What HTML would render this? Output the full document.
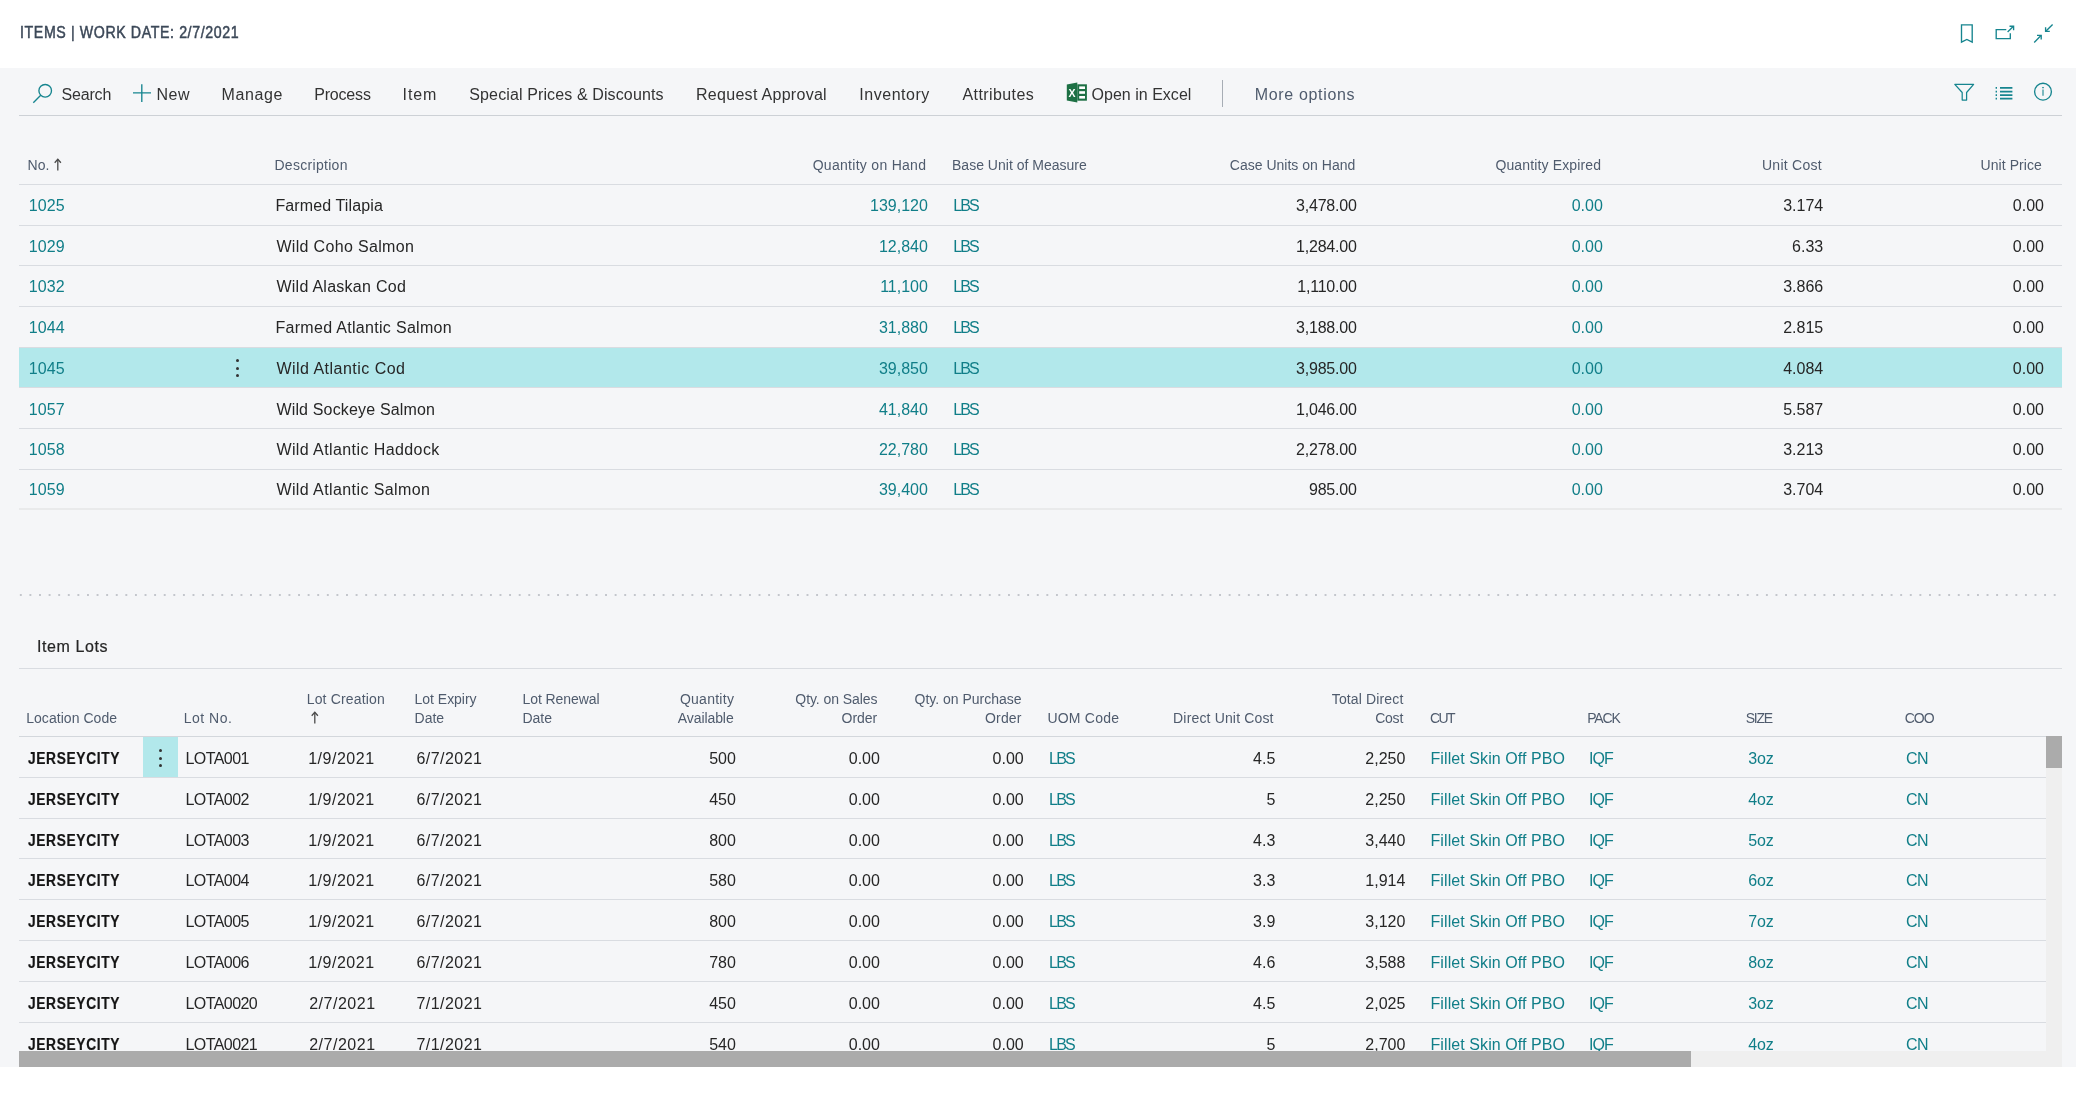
<!DOCTYPE html>
<html><head><meta charset="utf-8"><title>Items</title>
<style>
html,body{margin:0;padding:0;background:#fff;width:2076px;height:1095px;overflow:hidden;position:relative}
.t{position:absolute;white-space:nowrap;font-family:"Liberation Sans", sans-serif}
#root{position:absolute;left:0;top:0;width:2076px;height:1095px;will-change:transform}
</style></head><body><div id="root">
<div style="position:absolute;left:0px;top:68px;width:2076px;height:999px;background:#f5f6f8;"></div><div class="t" style="left:20.2px;top:24.33px;font-size:16.5px;line-height:16.5px;color:#3c4858;letter-spacing:0.7px;transform:scaleX(0.86);transform-origin:0 0;-webkit-text-stroke:0.5px #3c4858">ITEMS | WORK DATE: 2/7/2021</div><div class="t" style="left:61.60px;top:86.66px;font-size:16px;line-height:16px;color:#333333;font-weight:400;letter-spacing:-0.199px;">Search</div><div class="t" style="left:156.50px;top:86.66px;font-size:16px;line-height:16px;color:#333333;font-weight:400;letter-spacing:0.473px;">New</div><div class="t" style="left:221.50px;top:86.66px;font-size:16px;line-height:16px;color:#333333;font-weight:400;letter-spacing:0.616px;">Manage</div><div class="t" style="left:314.20px;top:86.66px;font-size:16px;line-height:16px;color:#333333;font-weight:400;letter-spacing:-0.183px;">Process</div><div class="t" style="left:402.60px;top:86.66px;font-size:16px;line-height:16px;color:#333333;font-weight:400;letter-spacing:0.870px;">Item</div><div class="t" style="left:469.30px;top:86.66px;font-size:16px;line-height:16px;color:#333333;font-weight:400;letter-spacing:0.120px;">Special Prices &amp; Discounts</div><div class="t" style="left:696.00px;top:86.66px;font-size:16px;line-height:16px;color:#333333;font-weight:400;letter-spacing:0.291px;">Request Approval</div><div class="t" style="left:859.30px;top:86.66px;font-size:16px;line-height:16px;color:#333333;font-weight:400;letter-spacing:0.523px;">Inventory</div><div class="t" style="left:962.50px;top:86.66px;font-size:16px;line-height:16px;color:#333333;font-weight:400;letter-spacing:0.402px;">Attributes</div><div class="t" style="left:1091.50px;top:86.66px;font-size:16px;line-height:16px;color:#333333;font-weight:400;letter-spacing:0.020px;">Open in Excel</div><div class="t" style="left:1254.80px;top:86.66px;font-size:16px;line-height:16px;color:#4f5b6d;font-weight:400;letter-spacing:0.655px;">More options</div><div style="position:absolute;left:19px;top:115px;width:2043px;height:1px;background:#cdd1d6;"></div><div style="position:absolute;left:1222px;top:80px;width:1px;height:27px;background:#a7adb5;"></div><div class="t" style="left:27.60px;top:158.05px;font-size:14px;line-height:14px;color:#4f5b6d;font-weight:400;letter-spacing:0.000px;">No.</div><svg style="position:absolute;left:53px;top:157px" width="10" height="15" viewBox="0 0 10 15" fill="none" stroke="#4a4a4a" stroke-width="1.3"><path d="M4.8 2.6 V13.5"/><path d="M1.7 5.7 L4.8 2.3 L7.9 5.7"/></svg><div class="t" style="left:274.40px;top:158.05px;font-size:14px;line-height:14px;color:#4f5b6d;font-weight:400;letter-spacing:0.306px;">Description</div><div class="t" style="left:812.70px;top:158.05px;font-size:14px;line-height:14px;color:#4f5b6d;font-weight:400;letter-spacing:0.289px;">Quantity on Hand</div><div class="t" style="left:952.00px;top:158.05px;font-size:14px;line-height:14px;color:#4f5b6d;font-weight:400;letter-spacing:0.009px;">Base Unit of Measure</div><div class="t" style="left:1229.80px;top:158.05px;font-size:14px;line-height:14px;color:#4f5b6d;font-weight:400;letter-spacing:0.012px;">Case Units on Hand</div><div class="t" style="left:1495.40px;top:158.05px;font-size:14px;line-height:14px;color:#4f5b6d;font-weight:400;letter-spacing:0.146px;">Quantity Expired</div><div class="t" style="left:1762.00px;top:158.05px;font-size:14px;line-height:14px;color:#4f5b6d;font-weight:400;letter-spacing:0.252px;">Unit Cost</div><div class="t" style="left:1980.50px;top:158.05px;font-size:14px;line-height:14px;color:#4f5b6d;font-weight:400;letter-spacing:0.078px;">Unit Price</div><div style="position:absolute;left:19px;top:184px;width:2043px;height:1px;background:#d9dce1;"></div><div class="t" style="left:28.80px;top:197.96px;font-size:16px;line-height:16px;color:#107e88;font-weight:400;letter-spacing:0.100px;">1025</div><div class="t" style="left:275.40px;top:197.96px;font-size:16px;line-height:16px;color:#262626;font-weight:400;letter-spacing:0.122px;">Farmed Tilapia</div><div class="t" style="left:870.06px;top:197.96px;font-size:16px;line-height:16px;color:#107e88;font-weight:400;letter-spacing:0.000px;">139,120</div><div class="t" style="left:953.30px;top:197.96px;font-size:16px;line-height:16px;color:#107e88;font-weight:400;letter-spacing:-1.935px;">LBS</div><div class="t" style="left:1296.02px;top:197.96px;font-size:16px;line-height:16px;color:#262626;font-weight:400;letter-spacing:-0.200px;">3,478.00</div><div class="t" style="left:1571.66px;top:197.96px;font-size:16px;line-height:16px;color:#107e88;font-weight:400;letter-spacing:0.000px;">0.00</div><div class="t" style="left:1783.16px;top:197.96px;font-size:16px;line-height:16px;color:#262626;font-weight:400;letter-spacing:0.000px;">3.174</div><div class="t" style="left:2012.86px;top:197.96px;font-size:16px;line-height:16px;color:#262626;font-weight:400;letter-spacing:0.000px;">0.00</div><div style="position:absolute;left:19px;top:225px;width:2043px;height:1px;background:#d9dce1;"></div><div class="t" style="left:28.80px;top:238.96px;font-size:16px;line-height:16px;color:#107e88;font-weight:400;letter-spacing:0.100px;">1029</div><div class="t" style="left:276.40px;top:238.96px;font-size:16px;line-height:16px;color:#262626;font-weight:400;letter-spacing:0.327px;">Wild Coho Salmon</div><div class="t" style="left:878.96px;top:238.96px;font-size:16px;line-height:16px;color:#107e88;font-weight:400;letter-spacing:0.000px;">12,840</div><div class="t" style="left:953.30px;top:238.96px;font-size:16px;line-height:16px;color:#107e88;font-weight:400;letter-spacing:-1.935px;">LBS</div><div class="t" style="left:1296.02px;top:238.96px;font-size:16px;line-height:16px;color:#262626;font-weight:400;letter-spacing:-0.200px;">1,284.00</div><div class="t" style="left:1571.66px;top:238.96px;font-size:16px;line-height:16px;color:#107e88;font-weight:400;letter-spacing:0.000px;">0.00</div><div class="t" style="left:1792.06px;top:238.96px;font-size:16px;line-height:16px;color:#262626;font-weight:400;letter-spacing:0.000px;">6.33</div><div class="t" style="left:2012.86px;top:238.96px;font-size:16px;line-height:16px;color:#262626;font-weight:400;letter-spacing:0.000px;">0.00</div><div style="position:absolute;left:19px;top:265px;width:2043px;height:1px;background:#d9dce1;"></div><div class="t" style="left:28.80px;top:278.96px;font-size:16px;line-height:16px;color:#107e88;font-weight:400;letter-spacing:0.100px;">1032</div><div class="t" style="left:276.40px;top:278.96px;font-size:16px;line-height:16px;color:#262626;font-weight:400;letter-spacing:0.268px;">Wild Alaskan Cod</div><div class="t" style="left:880.15px;top:278.96px;font-size:16px;line-height:16px;color:#107e88;font-weight:400;letter-spacing:0.000px;">11,100</div><div class="t" style="left:953.30px;top:278.96px;font-size:16px;line-height:16px;color:#107e88;font-weight:400;letter-spacing:-1.935px;">LBS</div><div class="t" style="left:1297.20px;top:278.96px;font-size:16px;line-height:16px;color:#262626;font-weight:400;letter-spacing:-0.200px;">1,110.00</div><div class="t" style="left:1571.66px;top:278.96px;font-size:16px;line-height:16px;color:#107e88;font-weight:400;letter-spacing:0.000px;">0.00</div><div class="t" style="left:1783.16px;top:278.96px;font-size:16px;line-height:16px;color:#262626;font-weight:400;letter-spacing:0.000px;">3.866</div><div class="t" style="left:2012.86px;top:278.96px;font-size:16px;line-height:16px;color:#262626;font-weight:400;letter-spacing:0.000px;">0.00</div><div style="position:absolute;left:19px;top:306px;width:2043px;height:1px;background:#d9dce1;"></div><div class="t" style="left:28.80px;top:319.96px;font-size:16px;line-height:16px;color:#107e88;font-weight:400;letter-spacing:0.100px;">1044</div><div class="t" style="left:275.40px;top:319.96px;font-size:16px;line-height:16px;color:#262626;font-weight:400;letter-spacing:0.308px;">Farmed Atlantic Salmon</div><div class="t" style="left:878.96px;top:319.96px;font-size:16px;line-height:16px;color:#107e88;font-weight:400;letter-spacing:0.000px;">31,880</div><div class="t" style="left:953.30px;top:319.96px;font-size:16px;line-height:16px;color:#107e88;font-weight:400;letter-spacing:-1.935px;">LBS</div><div class="t" style="left:1296.02px;top:319.96px;font-size:16px;line-height:16px;color:#262626;font-weight:400;letter-spacing:-0.200px;">3,188.00</div><div class="t" style="left:1571.66px;top:319.96px;font-size:16px;line-height:16px;color:#107e88;font-weight:400;letter-spacing:0.000px;">0.00</div><div class="t" style="left:1783.16px;top:319.96px;font-size:16px;line-height:16px;color:#262626;font-weight:400;letter-spacing:0.000px;">2.815</div><div class="t" style="left:2012.86px;top:319.96px;font-size:16px;line-height:16px;color:#262626;font-weight:400;letter-spacing:0.000px;">0.00</div><div style="position:absolute;left:19px;top:347px;width:2043px;height:1px;background:#d9dce1;"></div><div style="position:absolute;left:19px;top:348px;width:2043px;height:40px;background:#b2e8eb;"></div><div style="position:absolute;left:235.85px;top:359.3px;width:3px;height:3px;border-radius:50%;background:#333"></div><div style="position:absolute;left:235.85px;top:366.5px;width:3px;height:3px;border-radius:50%;background:#333"></div><div style="position:absolute;left:235.85px;top:373.7px;width:3px;height:3px;border-radius:50%;background:#333"></div><div class="t" style="left:28.80px;top:360.96px;font-size:16px;line-height:16px;color:#107e88;font-weight:400;letter-spacing:0.100px;">1045</div><div class="t" style="left:276.40px;top:360.96px;font-size:16px;line-height:16px;color:#262626;font-weight:400;letter-spacing:0.480px;">Wild Atlantic Cod</div><div class="t" style="left:878.96px;top:360.96px;font-size:16px;line-height:16px;color:#107e88;font-weight:400;letter-spacing:0.000px;">39,850</div><div class="t" style="left:953.30px;top:360.96px;font-size:16px;line-height:16px;color:#107e88;font-weight:400;letter-spacing:-1.935px;">LBS</div><div class="t" style="left:1296.02px;top:360.96px;font-size:16px;line-height:16px;color:#262626;font-weight:400;letter-spacing:-0.200px;">3,985.00</div><div class="t" style="left:1571.66px;top:360.96px;font-size:16px;line-height:16px;color:#107e88;font-weight:400;letter-spacing:0.000px;">0.00</div><div class="t" style="left:1783.16px;top:360.96px;font-size:16px;line-height:16px;color:#262626;font-weight:400;letter-spacing:0.000px;">4.084</div><div class="t" style="left:2012.86px;top:360.96px;font-size:16px;line-height:16px;color:#262626;font-weight:400;letter-spacing:0.000px;">0.00</div><div style="position:absolute;left:19px;top:387px;width:2043px;height:1px;background:#d9dce1;"></div><div class="t" style="left:28.80px;top:401.96px;font-size:16px;line-height:16px;color:#107e88;font-weight:400;letter-spacing:0.100px;">1057</div><div class="t" style="left:276.40px;top:401.96px;font-size:16px;line-height:16px;color:#262626;font-weight:400;letter-spacing:0.166px;">Wild Sockeye Salmon</div><div class="t" style="left:878.96px;top:401.96px;font-size:16px;line-height:16px;color:#107e88;font-weight:400;letter-spacing:0.000px;">41,840</div><div class="t" style="left:953.30px;top:401.96px;font-size:16px;line-height:16px;color:#107e88;font-weight:400;letter-spacing:-1.935px;">LBS</div><div class="t" style="left:1296.02px;top:401.96px;font-size:16px;line-height:16px;color:#262626;font-weight:400;letter-spacing:-0.200px;">1,046.00</div><div class="t" style="left:1571.66px;top:401.96px;font-size:16px;line-height:16px;color:#107e88;font-weight:400;letter-spacing:0.000px;">0.00</div><div class="t" style="left:1783.16px;top:401.96px;font-size:16px;line-height:16px;color:#262626;font-weight:400;letter-spacing:0.000px;">5.587</div><div class="t" style="left:2012.86px;top:401.96px;font-size:16px;line-height:16px;color:#262626;font-weight:400;letter-spacing:0.000px;">0.00</div><div style="position:absolute;left:19px;top:428px;width:2043px;height:1px;background:#d9dce1;"></div><div class="t" style="left:28.80px;top:441.96px;font-size:16px;line-height:16px;color:#107e88;font-weight:400;letter-spacing:0.100px;">1058</div><div class="t" style="left:276.40px;top:441.96px;font-size:16px;line-height:16px;color:#262626;font-weight:400;letter-spacing:0.409px;">Wild Atlantic Haddock</div><div class="t" style="left:878.96px;top:441.96px;font-size:16px;line-height:16px;color:#107e88;font-weight:400;letter-spacing:0.000px;">22,780</div><div class="t" style="left:953.30px;top:441.96px;font-size:16px;line-height:16px;color:#107e88;font-weight:400;letter-spacing:-1.935px;">LBS</div><div class="t" style="left:1296.02px;top:441.96px;font-size:16px;line-height:16px;color:#262626;font-weight:400;letter-spacing:-0.200px;">2,278.00</div><div class="t" style="left:1571.66px;top:441.96px;font-size:16px;line-height:16px;color:#107e88;font-weight:400;letter-spacing:0.000px;">0.00</div><div class="t" style="left:1783.16px;top:441.96px;font-size:16px;line-height:16px;color:#262626;font-weight:400;letter-spacing:0.000px;">3.213</div><div class="t" style="left:2012.86px;top:441.96px;font-size:16px;line-height:16px;color:#262626;font-weight:400;letter-spacing:0.000px;">0.00</div><div style="position:absolute;left:19px;top:469px;width:2043px;height:1px;background:#d9dce1;"></div><div class="t" style="left:28.80px;top:481.96px;font-size:16px;line-height:16px;color:#107e88;font-weight:400;letter-spacing:0.100px;">1059</div><div class="t" style="left:276.40px;top:481.96px;font-size:16px;line-height:16px;color:#262626;font-weight:400;letter-spacing:0.404px;">Wild Atlantic Salmon</div><div class="t" style="left:878.96px;top:481.96px;font-size:16px;line-height:16px;color:#107e88;font-weight:400;letter-spacing:0.000px;">39,400</div><div class="t" style="left:953.30px;top:481.96px;font-size:16px;line-height:16px;color:#107e88;font-weight:400;letter-spacing:-1.935px;">LBS</div><div class="t" style="left:1308.96px;top:481.96px;font-size:16px;line-height:16px;color:#262626;font-weight:400;letter-spacing:-0.200px;">985.00</div><div class="t" style="left:1571.66px;top:481.96px;font-size:16px;line-height:16px;color:#107e88;font-weight:400;letter-spacing:0.000px;">0.00</div><div class="t" style="left:1783.16px;top:481.96px;font-size:16px;line-height:16px;color:#262626;font-weight:400;letter-spacing:0.000px;">3.704</div><div class="t" style="left:2012.86px;top:481.96px;font-size:16px;line-height:16px;color:#262626;font-weight:400;letter-spacing:0.000px;">0.00</div><div style="position:absolute;left:19px;top:508px;width:2043px;height:2px;background:#e9eaeb;"></div><div style="position:absolute;left:15.6px;top:594px;width:2044px;height:2px;background-image:radial-gradient(circle, #c3c6cc 1px, transparent 1.2px);background-size:9.6px 2px;background-repeat:repeat-x"></div><div class="t" style="left:37.00px;top:638.56px;font-size:16px;line-height:16px;color:#262626;font-weight:400;letter-spacing:0.599px;-webkit-text-stroke:0.2px #262626;">Item Lots</div><div style="position:absolute;left:19px;top:668px;width:2043px;height:1px;background:#d9dce1;"></div><div class="t" style="left:26.20px;top:711.45px;font-size:14px;line-height:14px;color:#4f5b6d;font-weight:400;letter-spacing:0.050px;">Location Code</div><div class="t" style="left:183.80px;top:711.45px;font-size:14px;line-height:14px;color:#4f5b6d;font-weight:400;letter-spacing:0.492px;">Lot No.</div><div class="t" style="left:306.70px;top:692.45px;font-size:14px;line-height:14px;color:#4f5b6d;font-weight:400;letter-spacing:0.165px;">Lot Creation</div><svg style="position:absolute;left:310px;top:710px" width="10" height="15" viewBox="0 0 10 15" fill="none" stroke="#4a4a4a" stroke-width="1.3"><path d="M4.8 2.6 V13.5"/><path d="M1.7 5.7 L4.8 2.3 L7.9 5.7"/></svg><div class="t" style="left:414.60px;top:692.45px;font-size:14px;line-height:14px;color:#4f5b6d;font-weight:400;letter-spacing:-0.028px;">Lot Expiry</div><div class="t" style="left:414.60px;top:711.45px;font-size:14px;line-height:14px;color:#4f5b6d;font-weight:400;letter-spacing:-0.029px;">Date</div><div class="t" style="left:522.50px;top:692.45px;font-size:14px;line-height:14px;color:#4f5b6d;font-weight:400;letter-spacing:-0.082px;">Lot Renewal</div><div class="t" style="left:522.50px;top:711.45px;font-size:14px;line-height:14px;color:#4f5b6d;font-weight:400;letter-spacing:-0.029px;">Date</div><div class="t" style="left:679.90px;top:692.45px;font-size:14px;line-height:14px;color:#4f5b6d;font-weight:400;letter-spacing:0.266px;">Quantity</div><div class="t" style="left:677.80px;top:711.45px;font-size:14px;line-height:14px;color:#4f5b6d;font-weight:400;letter-spacing:-0.084px;">Available</div><div class="t" style="left:795.30px;top:692.45px;font-size:14px;line-height:14px;color:#4f5b6d;font-weight:400;letter-spacing:-0.058px;">Qty. on Sales</div><div class="t" style="left:841.60px;top:711.45px;font-size:14px;line-height:14px;color:#4f5b6d;font-weight:400;letter-spacing:-0.031px;">Order</div><div class="t" style="left:914.50px;top:692.45px;font-size:14px;line-height:14px;color:#4f5b6d;font-weight:400;letter-spacing:-0.003px;">Qty. on Purchase</div><div class="t" style="left:985.00px;top:711.45px;font-size:14px;line-height:14px;color:#4f5b6d;font-weight:400;letter-spacing:0.169px;">Order</div><div class="t" style="left:1047.40px;top:711.45px;font-size:14px;line-height:14px;color:#4f5b6d;font-weight:400;letter-spacing:0.224px;">UOM Code</div><div class="t" style="left:1173.10px;top:711.45px;font-size:14px;line-height:14px;color:#4f5b6d;font-weight:400;letter-spacing:0.158px;">Direct Unit Cost</div><div class="t" style="left:1331.80px;top:692.45px;font-size:14px;line-height:14px;color:#4f5b6d;font-weight:400;letter-spacing:0.134px;">Total Direct</div><div class="t" style="left:1375.20px;top:711.45px;font-size:14px;line-height:14px;color:#4f5b6d;font-weight:400;letter-spacing:-0.232px;">Cost</div><div class="t" style="left:1430.00px;top:711.45px;font-size:14px;line-height:14px;color:#4f5b6d;font-weight:400;letter-spacing:-1.610px;">CUT</div><div class="t" style="left:1587.20px;top:711.45px;font-size:14px;line-height:14px;color:#4f5b6d;font-weight:400;letter-spacing:-1.182px;">PACK</div><div class="t" style="left:1745.80px;top:711.45px;font-size:14px;line-height:14px;color:#4f5b6d;font-weight:400;letter-spacing:-1.260px;">SIZE</div><div class="t" style="left:1904.70px;top:711.45px;font-size:14px;line-height:14px;color:#4f5b6d;font-weight:400;letter-spacing:-1.000px;">COO</div><div style="position:absolute;left:19px;top:736px;width:2027px;height:1px;background:#d3d7dc;"></div><div style="position:absolute;left:0;top:737px;width:2076px;height:314px;overflow:hidden"><div style="position:absolute;left:143px;top:0px;width:35px;height:40px;background:#b2e8eb"></div><div style="position:absolute;left:158.5px;top:12.3px;width:3px;height:3px;border-radius:50%;background:#333"></div><div style="position:absolute;left:158.5px;top:19.5px;width:3px;height:3px;border-radius:50%;background:#333"></div><div style="position:absolute;left:158.5px;top:26.7px;width:3px;height:3px;border-radius:50%;background:#333"></div><div class="t" style="left:28px;top:13.96px;font-size:16px;line-height:16px;color:#141414;font-weight:700;letter-spacing:0.75px;transform:scaleX(0.86);transform-origin:0 0;-webkit-text-stroke:0.2px #141414">JERSEYCITY</div><div class="t" style="left:185.40px;top:13.96px;font-size:16px;line-height:16px;color:#262626;font-weight:400;letter-spacing:-0.550px;">LOTA001</div><div class="t" style="left:308.20px;top:13.96px;font-size:16px;line-height:16px;color:#262626;font-weight:400;letter-spacing:0.517px;">1/9/2021</div><div class="t" style="left:416.40px;top:13.96px;font-size:16px;line-height:16px;color:#262626;font-weight:400;letter-spacing:0.474px;">6/7/2021</div><div class="t" style="left:709.20px;top:13.96px;font-size:16px;line-height:16px;color:#262626;font-weight:400;letter-spacing:0.000px;">500</div><div class="t" style="left:848.76px;top:13.96px;font-size:16px;line-height:16px;color:#262626;font-weight:400;letter-spacing:0.000px;">0.00</div><div class="t" style="left:992.56px;top:13.96px;font-size:16px;line-height:16px;color:#262626;font-weight:400;letter-spacing:0.000px;">0.00</div><div class="t" style="left:1049.00px;top:13.96px;font-size:16px;line-height:16px;color:#107e88;font-weight:400;letter-spacing:-1.735px;">LBS</div><div class="t" style="left:1253.06px;top:13.96px;font-size:16px;line-height:16px;color:#262626;font-weight:400;letter-spacing:0.000px;">4.5</div><div class="t" style="left:1365.36px;top:13.96px;font-size:16px;line-height:16px;color:#262626;font-weight:400;letter-spacing:0.000px;">2,250</div><div class="t" style="left:1430.50px;top:13.96px;font-size:16px;line-height:16px;color:#107e88;font-weight:400;letter-spacing:0.082px;">Fillet Skin Off PBO</div><div class="t" style="left:1589.00px;top:13.96px;font-size:16px;line-height:16px;color:#107e88;font-weight:400;letter-spacing:-0.895px;">IQF</div><div class="t" style="left:1748.20px;top:13.96px;font-size:16px;line-height:16px;color:#107e88;font-weight:400;letter-spacing:-0.100px;">3oz</div><div class="t" style="left:1906.00px;top:13.96px;font-size:16px;line-height:16px;color:#107e88;font-weight:400;letter-spacing:-0.655px;">CN</div><div style="position:absolute;left:19px;top:40px;width:2027px;height:1px;background:#d9dce1"></div><div class="t" style="left:28px;top:54.96px;font-size:16px;line-height:16px;color:#141414;font-weight:700;letter-spacing:0.75px;transform:scaleX(0.86);transform-origin:0 0;-webkit-text-stroke:0.2px #141414">JERSEYCITY</div><div class="t" style="left:185.40px;top:54.96px;font-size:16px;line-height:16px;color:#262626;font-weight:400;letter-spacing:-0.550px;">LOTA002</div><div class="t" style="left:308.20px;top:54.96px;font-size:16px;line-height:16px;color:#262626;font-weight:400;letter-spacing:0.517px;">1/9/2021</div><div class="t" style="left:416.40px;top:54.96px;font-size:16px;line-height:16px;color:#262626;font-weight:400;letter-spacing:0.474px;">6/7/2021</div><div class="t" style="left:709.20px;top:54.96px;font-size:16px;line-height:16px;color:#262626;font-weight:400;letter-spacing:0.000px;">450</div><div class="t" style="left:848.76px;top:54.96px;font-size:16px;line-height:16px;color:#262626;font-weight:400;letter-spacing:0.000px;">0.00</div><div class="t" style="left:992.56px;top:54.96px;font-size:16px;line-height:16px;color:#262626;font-weight:400;letter-spacing:0.000px;">0.00</div><div class="t" style="left:1049.00px;top:54.96px;font-size:16px;line-height:16px;color:#107e88;font-weight:400;letter-spacing:-1.735px;">LBS</div><div class="t" style="left:1266.40px;top:54.96px;font-size:16px;line-height:16px;color:#262626;font-weight:400;letter-spacing:0.000px;">5</div><div class="t" style="left:1365.36px;top:54.96px;font-size:16px;line-height:16px;color:#262626;font-weight:400;letter-spacing:0.000px;">2,250</div><div class="t" style="left:1430.50px;top:54.96px;font-size:16px;line-height:16px;color:#107e88;font-weight:400;letter-spacing:0.082px;">Fillet Skin Off PBO</div><div class="t" style="left:1589.00px;top:54.96px;font-size:16px;line-height:16px;color:#107e88;font-weight:400;letter-spacing:-0.895px;">IQF</div><div class="t" style="left:1748.20px;top:54.96px;font-size:16px;line-height:16px;color:#107e88;font-weight:400;letter-spacing:-0.100px;">4oz</div><div class="t" style="left:1906.00px;top:54.96px;font-size:16px;line-height:16px;color:#107e88;font-weight:400;letter-spacing:-0.655px;">CN</div><div style="position:absolute;left:19px;top:81px;width:2027px;height:1px;background:#d9dce1"></div><div class="t" style="left:28px;top:95.96px;font-size:16px;line-height:16px;color:#141414;font-weight:700;letter-spacing:0.75px;transform:scaleX(0.86);transform-origin:0 0;-webkit-text-stroke:0.2px #141414">JERSEYCITY</div><div class="t" style="left:185.40px;top:95.96px;font-size:16px;line-height:16px;color:#262626;font-weight:400;letter-spacing:-0.550px;">LOTA003</div><div class="t" style="left:308.20px;top:95.96px;font-size:16px;line-height:16px;color:#262626;font-weight:400;letter-spacing:0.517px;">1/9/2021</div><div class="t" style="left:416.40px;top:95.96px;font-size:16px;line-height:16px;color:#262626;font-weight:400;letter-spacing:0.474px;">6/7/2021</div><div class="t" style="left:709.20px;top:95.96px;font-size:16px;line-height:16px;color:#262626;font-weight:400;letter-spacing:0.000px;">800</div><div class="t" style="left:848.76px;top:95.96px;font-size:16px;line-height:16px;color:#262626;font-weight:400;letter-spacing:0.000px;">0.00</div><div class="t" style="left:992.56px;top:95.96px;font-size:16px;line-height:16px;color:#262626;font-weight:400;letter-spacing:0.000px;">0.00</div><div class="t" style="left:1049.00px;top:95.96px;font-size:16px;line-height:16px;color:#107e88;font-weight:400;letter-spacing:-1.735px;">LBS</div><div class="t" style="left:1253.06px;top:95.96px;font-size:16px;line-height:16px;color:#262626;font-weight:400;letter-spacing:0.000px;">4.3</div><div class="t" style="left:1365.36px;top:95.96px;font-size:16px;line-height:16px;color:#262626;font-weight:400;letter-spacing:0.000px;">3,440</div><div class="t" style="left:1430.50px;top:95.96px;font-size:16px;line-height:16px;color:#107e88;font-weight:400;letter-spacing:0.082px;">Fillet Skin Off PBO</div><div class="t" style="left:1589.00px;top:95.96px;font-size:16px;line-height:16px;color:#107e88;font-weight:400;letter-spacing:-0.895px;">IQF</div><div class="t" style="left:1748.20px;top:95.96px;font-size:16px;line-height:16px;color:#107e88;font-weight:400;letter-spacing:-0.100px;">5oz</div><div class="t" style="left:1906.00px;top:95.96px;font-size:16px;line-height:16px;color:#107e88;font-weight:400;letter-spacing:-0.655px;">CN</div><div style="position:absolute;left:19px;top:121px;width:2027px;height:1px;background:#d9dce1"></div><div class="t" style="left:28px;top:135.96px;font-size:16px;line-height:16px;color:#141414;font-weight:700;letter-spacing:0.75px;transform:scaleX(0.86);transform-origin:0 0;-webkit-text-stroke:0.2px #141414">JERSEYCITY</div><div class="t" style="left:185.40px;top:135.96px;font-size:16px;line-height:16px;color:#262626;font-weight:400;letter-spacing:-0.550px;">LOTA004</div><div class="t" style="left:308.20px;top:135.96px;font-size:16px;line-height:16px;color:#262626;font-weight:400;letter-spacing:0.517px;">1/9/2021</div><div class="t" style="left:416.40px;top:135.96px;font-size:16px;line-height:16px;color:#262626;font-weight:400;letter-spacing:0.474px;">6/7/2021</div><div class="t" style="left:709.20px;top:135.96px;font-size:16px;line-height:16px;color:#262626;font-weight:400;letter-spacing:0.000px;">580</div><div class="t" style="left:848.76px;top:135.96px;font-size:16px;line-height:16px;color:#262626;font-weight:400;letter-spacing:0.000px;">0.00</div><div class="t" style="left:992.56px;top:135.96px;font-size:16px;line-height:16px;color:#262626;font-weight:400;letter-spacing:0.000px;">0.00</div><div class="t" style="left:1049.00px;top:135.96px;font-size:16px;line-height:16px;color:#107e88;font-weight:400;letter-spacing:-1.735px;">LBS</div><div class="t" style="left:1253.06px;top:135.96px;font-size:16px;line-height:16px;color:#262626;font-weight:400;letter-spacing:0.000px;">3.3</div><div class="t" style="left:1365.36px;top:135.96px;font-size:16px;line-height:16px;color:#262626;font-weight:400;letter-spacing:0.000px;">1,914</div><div class="t" style="left:1430.50px;top:135.96px;font-size:16px;line-height:16px;color:#107e88;font-weight:400;letter-spacing:0.082px;">Fillet Skin Off PBO</div><div class="t" style="left:1589.00px;top:135.96px;font-size:16px;line-height:16px;color:#107e88;font-weight:400;letter-spacing:-0.895px;">IQF</div><div class="t" style="left:1748.20px;top:135.96px;font-size:16px;line-height:16px;color:#107e88;font-weight:400;letter-spacing:-0.100px;">6oz</div><div class="t" style="left:1906.00px;top:135.96px;font-size:16px;line-height:16px;color:#107e88;font-weight:400;letter-spacing:-0.655px;">CN</div><div style="position:absolute;left:19px;top:162px;width:2027px;height:1px;background:#d9dce1"></div><div class="t" style="left:28px;top:176.96px;font-size:16px;line-height:16px;color:#141414;font-weight:700;letter-spacing:0.75px;transform:scaleX(0.86);transform-origin:0 0;-webkit-text-stroke:0.2px #141414">JERSEYCITY</div><div class="t" style="left:185.40px;top:176.96px;font-size:16px;line-height:16px;color:#262626;font-weight:400;letter-spacing:-0.550px;">LOTA005</div><div class="t" style="left:308.20px;top:176.96px;font-size:16px;line-height:16px;color:#262626;font-weight:400;letter-spacing:0.517px;">1/9/2021</div><div class="t" style="left:416.40px;top:176.96px;font-size:16px;line-height:16px;color:#262626;font-weight:400;letter-spacing:0.474px;">6/7/2021</div><div class="t" style="left:709.20px;top:176.96px;font-size:16px;line-height:16px;color:#262626;font-weight:400;letter-spacing:0.000px;">800</div><div class="t" style="left:848.76px;top:176.96px;font-size:16px;line-height:16px;color:#262626;font-weight:400;letter-spacing:0.000px;">0.00</div><div class="t" style="left:992.56px;top:176.96px;font-size:16px;line-height:16px;color:#262626;font-weight:400;letter-spacing:0.000px;">0.00</div><div class="t" style="left:1049.00px;top:176.96px;font-size:16px;line-height:16px;color:#107e88;font-weight:400;letter-spacing:-1.735px;">LBS</div><div class="t" style="left:1253.06px;top:176.96px;font-size:16px;line-height:16px;color:#262626;font-weight:400;letter-spacing:0.000px;">3.9</div><div class="t" style="left:1365.36px;top:176.96px;font-size:16px;line-height:16px;color:#262626;font-weight:400;letter-spacing:0.000px;">3,120</div><div class="t" style="left:1430.50px;top:176.96px;font-size:16px;line-height:16px;color:#107e88;font-weight:400;letter-spacing:0.082px;">Fillet Skin Off PBO</div><div class="t" style="left:1589.00px;top:176.96px;font-size:16px;line-height:16px;color:#107e88;font-weight:400;letter-spacing:-0.895px;">IQF</div><div class="t" style="left:1748.20px;top:176.96px;font-size:16px;line-height:16px;color:#107e88;font-weight:400;letter-spacing:-0.100px;">7oz</div><div class="t" style="left:1906.00px;top:176.96px;font-size:16px;line-height:16px;color:#107e88;font-weight:400;letter-spacing:-0.655px;">CN</div><div style="position:absolute;left:19px;top:203px;width:2027px;height:1px;background:#d9dce1"></div><div class="t" style="left:28px;top:217.96px;font-size:16px;line-height:16px;color:#141414;font-weight:700;letter-spacing:0.75px;transform:scaleX(0.86);transform-origin:0 0;-webkit-text-stroke:0.2px #141414">JERSEYCITY</div><div class="t" style="left:185.40px;top:217.96px;font-size:16px;line-height:16px;color:#262626;font-weight:400;letter-spacing:-0.550px;">LOTA006</div><div class="t" style="left:308.20px;top:217.96px;font-size:16px;line-height:16px;color:#262626;font-weight:400;letter-spacing:0.517px;">1/9/2021</div><div class="t" style="left:416.40px;top:217.96px;font-size:16px;line-height:16px;color:#262626;font-weight:400;letter-spacing:0.474px;">6/7/2021</div><div class="t" style="left:709.20px;top:217.96px;font-size:16px;line-height:16px;color:#262626;font-weight:400;letter-spacing:0.000px;">780</div><div class="t" style="left:848.76px;top:217.96px;font-size:16px;line-height:16px;color:#262626;font-weight:400;letter-spacing:0.000px;">0.00</div><div class="t" style="left:992.56px;top:217.96px;font-size:16px;line-height:16px;color:#262626;font-weight:400;letter-spacing:0.000px;">0.00</div><div class="t" style="left:1049.00px;top:217.96px;font-size:16px;line-height:16px;color:#107e88;font-weight:400;letter-spacing:-1.735px;">LBS</div><div class="t" style="left:1253.06px;top:217.96px;font-size:16px;line-height:16px;color:#262626;font-weight:400;letter-spacing:0.000px;">4.6</div><div class="t" style="left:1365.36px;top:217.96px;font-size:16px;line-height:16px;color:#262626;font-weight:400;letter-spacing:0.000px;">3,588</div><div class="t" style="left:1430.50px;top:217.96px;font-size:16px;line-height:16px;color:#107e88;font-weight:400;letter-spacing:0.082px;">Fillet Skin Off PBO</div><div class="t" style="left:1589.00px;top:217.96px;font-size:16px;line-height:16px;color:#107e88;font-weight:400;letter-spacing:-0.895px;">IQF</div><div class="t" style="left:1748.20px;top:217.96px;font-size:16px;line-height:16px;color:#107e88;font-weight:400;letter-spacing:-0.100px;">8oz</div><div class="t" style="left:1906.00px;top:217.96px;font-size:16px;line-height:16px;color:#107e88;font-weight:400;letter-spacing:-0.655px;">CN</div><div style="position:absolute;left:19px;top:244px;width:2027px;height:1px;background:#d9dce1"></div><div class="t" style="left:28px;top:258.96px;font-size:16px;line-height:16px;color:#141414;font-weight:700;letter-spacing:0.75px;transform:scaleX(0.86);transform-origin:0 0;-webkit-text-stroke:0.2px #141414">JERSEYCITY</div><div class="t" style="left:185.40px;top:258.96px;font-size:16px;line-height:16px;color:#262626;font-weight:400;letter-spacing:-0.550px;">LOTA0020</div><div class="t" style="left:309.20px;top:258.96px;font-size:16px;line-height:16px;color:#262626;font-weight:400;letter-spacing:0.517px;">2/7/2021</div><div class="t" style="left:416.40px;top:258.96px;font-size:16px;line-height:16px;color:#262626;font-weight:400;letter-spacing:0.474px;">7/1/2021</div><div class="t" style="left:709.20px;top:258.96px;font-size:16px;line-height:16px;color:#262626;font-weight:400;letter-spacing:0.000px;">450</div><div class="t" style="left:848.76px;top:258.96px;font-size:16px;line-height:16px;color:#262626;font-weight:400;letter-spacing:0.000px;">0.00</div><div class="t" style="left:992.56px;top:258.96px;font-size:16px;line-height:16px;color:#262626;font-weight:400;letter-spacing:0.000px;">0.00</div><div class="t" style="left:1049.00px;top:258.96px;font-size:16px;line-height:16px;color:#107e88;font-weight:400;letter-spacing:-1.735px;">LBS</div><div class="t" style="left:1253.06px;top:258.96px;font-size:16px;line-height:16px;color:#262626;font-weight:400;letter-spacing:0.000px;">4.5</div><div class="t" style="left:1365.36px;top:258.96px;font-size:16px;line-height:16px;color:#262626;font-weight:400;letter-spacing:0.000px;">2,025</div><div class="t" style="left:1430.50px;top:258.96px;font-size:16px;line-height:16px;color:#107e88;font-weight:400;letter-spacing:0.082px;">Fillet Skin Off PBO</div><div class="t" style="left:1589.00px;top:258.96px;font-size:16px;line-height:16px;color:#107e88;font-weight:400;letter-spacing:-0.895px;">IQF</div><div class="t" style="left:1748.20px;top:258.96px;font-size:16px;line-height:16px;color:#107e88;font-weight:400;letter-spacing:-0.100px;">3oz</div><div class="t" style="left:1906.00px;top:258.96px;font-size:16px;line-height:16px;color:#107e88;font-weight:400;letter-spacing:-0.655px;">CN</div><div style="position:absolute;left:19px;top:285px;width:2027px;height:1px;background:#d9dce1"></div><div class="t" style="left:28px;top:299.96px;font-size:16px;line-height:16px;color:#141414;font-weight:700;letter-spacing:0.75px;transform:scaleX(0.86);transform-origin:0 0;-webkit-text-stroke:0.2px #141414">JERSEYCITY</div><div class="t" style="left:185.40px;top:299.96px;font-size:16px;line-height:16px;color:#262626;font-weight:400;letter-spacing:-0.550px;">LOTA0021</div><div class="t" style="left:309.20px;top:299.96px;font-size:16px;line-height:16px;color:#262626;font-weight:400;letter-spacing:0.517px;">2/7/2021</div><div class="t" style="left:416.40px;top:299.96px;font-size:16px;line-height:16px;color:#262626;font-weight:400;letter-spacing:0.474px;">7/1/2021</div><div class="t" style="left:709.20px;top:299.96px;font-size:16px;line-height:16px;color:#262626;font-weight:400;letter-spacing:0.000px;">540</div><div class="t" style="left:848.76px;top:299.96px;font-size:16px;line-height:16px;color:#262626;font-weight:400;letter-spacing:0.000px;">0.00</div><div class="t" style="left:992.56px;top:299.96px;font-size:16px;line-height:16px;color:#262626;font-weight:400;letter-spacing:0.000px;">0.00</div><div class="t" style="left:1049.00px;top:299.96px;font-size:16px;line-height:16px;color:#107e88;font-weight:400;letter-spacing:-1.735px;">LBS</div><div class="t" style="left:1266.40px;top:299.96px;font-size:16px;line-height:16px;color:#262626;font-weight:400;letter-spacing:0.000px;">5</div><div class="t" style="left:1365.36px;top:299.96px;font-size:16px;line-height:16px;color:#262626;font-weight:400;letter-spacing:0.000px;">2,700</div><div class="t" style="left:1430.50px;top:299.96px;font-size:16px;line-height:16px;color:#107e88;font-weight:400;letter-spacing:0.082px;">Fillet Skin Off PBO</div><div class="t" style="left:1589.00px;top:299.96px;font-size:16px;line-height:16px;color:#107e88;font-weight:400;letter-spacing:-0.895px;">IQF</div><div class="t" style="left:1748.20px;top:299.96px;font-size:16px;line-height:16px;color:#107e88;font-weight:400;letter-spacing:-0.100px;">4oz</div><div class="t" style="left:1906.00px;top:299.96px;font-size:16px;line-height:16px;color:#107e88;font-weight:400;letter-spacing:-0.655px;">CN</div></div><div style="position:absolute;left:2046px;top:737px;width:16px;height:314px;background:#efefef;"></div><div style="position:absolute;left:2046px;top:736px;width:16px;height:32px;background:#ababab;"></div><div style="position:absolute;left:19px;top:1051px;width:2043px;height:16px;background:#efefef;"></div><div style="position:absolute;left:19px;top:1051px;width:1672px;height:16px;background:#ababab;"></div><svg style="position:absolute;left:0;top:0" width="2076" height="1095" viewBox="0 0 2076 1095" fill="none" stroke="#16858f" stroke-width="1.35">
 <path d="M1961.5 24.8 H1972.2 V42.2 L1966.85 39.4 L1961.5 42.2 Z" stroke-linejoin="miter"/>
 <path d="M2006.3 29.6 H1996.2 V38.6 H2010.3 V33.3"/>
 <path d="M2007.6 32 L2013.2 26.6"/>
 <path d="M2009.5 26.2 H2013.6 V30.3"/>
 <path d="M2052.6 24.4 L2045.8 31.2"/>
 <path d="M2045.6 27.2 V31.4 H2049.8"/>
 <path d="M2034.2 42.4 L2041 35.6"/>
 <path d="M2037 35.4 H2041.2 V39.6"/>
 <circle cx="45.2" cy="90.8" r="6.3"/>
 <path d="M40.7 95.3 L33.3 102.7"/>
 <path d="M133 92.9 H151 M141.8 84.2 V102"/>
 <path d="M1954.8 84.4 H1973.6 L1966.6 92.5 V100 H1962.2 V92.5 Z" stroke-linejoin="round" stroke-width="1.25"/>
 <path d="M2000 87.9 H2012.4 M2000 91.7 H2012.4 M2000 95.2 H2012.4 M2000 98.7 H2012.4" stroke-width="1.7"/>
 <path d="M1995.6 87.9 H1997 M1995.6 91.7 H1997 M1995.6 95.2 H1997 M1995.6 98.7 H1997" stroke-width="1.7"/>
 <circle cx="2043" cy="91.7" r="8.4"/>
 <path d="M2043 89.6 V95.8" stroke-width="1.1"/>
 <circle cx="2043" cy="87.7" r="0.45" fill="#16858f" stroke-width="0.9"/>
</svg><svg style="position:absolute;left:1066px;top:82px" width="22" height="21" viewBox="0 0 22 21">
 <path d="M0.8 2.6 L11.3 0.6 V20.4 L0.8 18.4 Z" fill="#1d7044"/>
 <rect x="11.3" y="2.3" width="9.6" height="16.4" fill="#1d7044"/>
 <rect x="13.2" y="4.4" width="5.8" height="2.6" fill="#fff"/>
 <rect x="13.2" y="9.2" width="5.8" height="2.6" fill="#fff"/>
 <rect x="13.2" y="14" width="5.8" height="2.6" fill="#fff"/>
 <text x="2.6" y="15" font-family="Liberation Sans" font-weight="700" font-size="10.5" fill="#fff">X</text>
</svg>
</div></body></html>
